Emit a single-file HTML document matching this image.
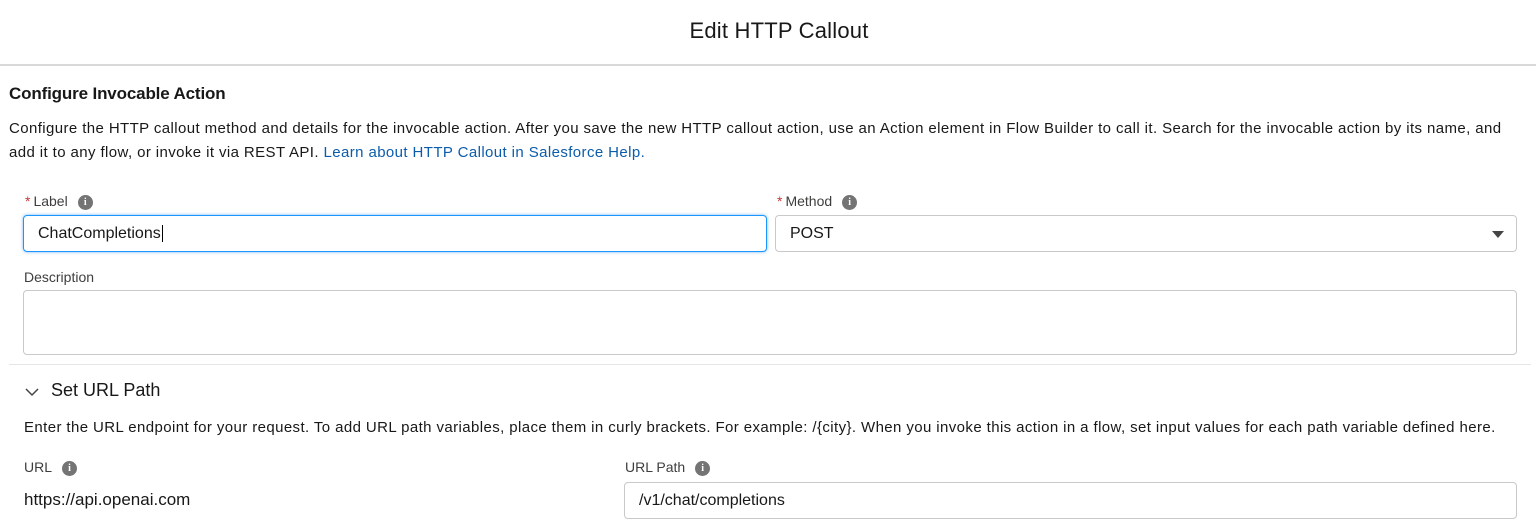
<!DOCTYPE html>
<html><head><style>
*{box-sizing:border-box;margin:0;padding:0}
body{width:1536px;height:528px;overflow:hidden;background:#fff;font-family:"Liberation Sans",sans-serif;color:#181818;position:relative}
.a{position:absolute;white-space:nowrap}
.hdr{position:absolute;left:0;top:0;width:1536px;height:66px;border-bottom:2px solid #d8d8d8;text-align:center;font-size:22px;line-height:62px;color:#181818;padding-left:22px;letter-spacing:0.2px}
.p{font-size:15px;letter-spacing:0.4px;color:#181818}
.lbl{font-size:14px;color:#3e3e3c}
.req{color:#c23934;margin-right:3px}
.info{display:inline-block;width:15px;height:15px;border-radius:50%;background:#747474;color:#fff;font-size:10px;font-weight:bold;line-height:15px;text-align:center;vertical-align:1px;margin-left:10px;font-family:"Liberation Serif",serif}
.box{position:absolute;border:1px solid #c9c9c9;border-radius:4px;background:#fff;font-size:16px;padding-left:14px;line-height:35px}
a{color:#0b5cab;text-decoration:none}
</style></head><body>
<div class="hdr">Edit HTTP Callout</div>
<div class="a" style="left:9px;top:84px;font-size:17px;font-weight:bold;letter-spacing:-0.15px">Configure Invocable Action</div>
<div class="a p" style="left:9px;top:120px">Configure the HTTP callout method and details for the invocable action. After you save the new HTTP callout action, use an Action element in Flow Builder to call it. Search for the invocable action by its name, and</div>
<div class="a p" style="left:9px;top:144px">add it to any flow, or invoke it via REST API. <a>Learn about HTTP Callout in Salesforce Help.</a></div>
<div class="a lbl" style="left:25px;top:193px"><span class="req">*</span>Label<span class="info">i</span></div>
<div class="box" style="left:23px;top:215px;width:744px;height:37px;border-color:#1b96ff;box-shadow:0 0 3px #76b5ef">ChatCompletions<span style="border-left:1px solid #000;margin-left:1px"></span></div>
<div class="a lbl" style="left:777px;top:193px"><span class="req">*</span>Method<span class="info">i</span></div>
<div class="box" style="left:775px;top:215px;width:742px;height:37px">POST<span style="position:absolute;right:12px;top:15px;width:0;height:0;border-left:6px solid transparent;border-right:6px solid transparent;border-top:7px solid #444"></span></div>
<div class="a lbl" style="left:24px;top:269px">Description</div>
<div class="box" style="left:23px;top:290px;width:1494px;height:65px"></div>
<div class="a" style="left:9px;top:364px;width:1522px;height:1px;background:#e5e5e5"></div>
<svg class="a" style="left:24px;top:386px" width="16" height="12" viewBox="0 0 16 12"><path d="M2 3l6 6 6-6" fill="none" stroke="#444" stroke-width="1.5"/></svg>
<div class="a" style="left:51px;top:380px;font-size:18px">Set URL Path</div>
<div class="a p" style="left:24px;top:419px">Enter the URL endpoint for your request. To add URL path variables, place them in curly brackets. For example: /{city}. When you invoke this action in a flow, set input values for each path variable defined here.</div>
<div class="a lbl" style="left:24px;top:459px">URL<span class="info">i</span></div>
<div class="a" style="left:24px;top:490px;font-size:17px">https://api.openai.com</div>
<div class="a lbl" style="left:625px;top:459px">URL Path<span class="info">i</span></div>
<div class="box" style="left:624px;top:482px;width:893px;height:37px">/v1/chat/completions</div>
</body></html>
